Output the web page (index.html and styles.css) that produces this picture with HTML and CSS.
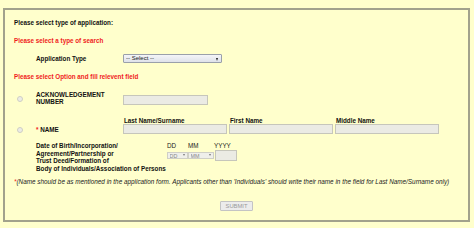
FILE: index.html
```html
<!DOCTYPE html>
<html>
<head>
<meta charset="utf-8">
<link rel="stylesheet" href="styles.css">
</head>
<body>
<div class="box">
  <p class="row heading">Please select type of application:</p>
  <p class="row err err1">Please select a type of search</p>
  <div class="row apptype">
    <span class="lbl">Application Type</span>
    <span class="sel sel-app"><select class="app-select"><option>-- Select --</option></select></span>
  </div>
  <p class="row err err2">Please select Option and fill relevent field</p>

  <div class="opt ack">
    <input type="radio" name="opt" class="radio">
    <span class="lbl multi">ACKNOWLEDGEMENT<br>NUMBER</span>
    <input type="text" class="field ack-field">
  </div>

  <div class="opt name">
    <input type="radio" name="opt" class="radio">
    <span class="lbl name-lbl"><span class="star">*</span> NAME</span>
    <div class="names">
      <span class="lbl">Last Name/Surname</span>
      <span class="lbl">First Name</span>
      <span class="lbl">Middle Name</span>
      <input type="text" class="field">
      <input type="text" class="field">
      <input type="text" class="field">
    </div>
  </div>

  <div class="opt dob">
    <span class="spacer"></span>
    <span class="lbl multi nowrap">Date of Birth/Incorporation/<br>Agreement/Partnership or<br>Trust Deed/Formation of<br>Body of Individuals/Association of Persons</span>
    <div class="dates">
      <span class="dlbl">DD</span>
      <span class="dlbl">MM</span>
      <span class="dlbl">YYYY</span>
      <span class="sel sel-small sel-dd"><select class="small-select"><option>DD</option></select></span>
      <span class="sel sel-small sel-mm"><select class="small-select"><option>MM</option></select></span>
      <input type="text" class="field year">
    </div>
  </div>

  <p class="note"><span class="star">*</span>(Name should be as mentioned in the application form. Applicants other than 'Individuals' should write their name in the field for Last Name/Surname only)</p>

  <div class="actions">
    <button type="button" class="submit">SUBMIT</button>
  </div>
</div>
</body>
</html>
```

FILE: styles.css
```css
html, body {
  margin: 0;
  padding: 0;
  background: #ffffcc;
}

body {
  font-family: "Liberation Sans", Arial, sans-serif;
  font-size: 6.3px;
  color: #111;
}

.box {
  box-sizing: border-box;
  width: 467px;
  height: 214px;
  margin: 8px 0 0 3px;
  border: 2px solid #a2a28c;
  padding: 0 9px 0 9px;
  background: #ffffcc;
}

p { margin: 0; }

.row {
  display: flex;
  align-items: center;
}

.heading {
  height: 24px;
  font-weight: bold;
  color: #111;
}

.err {
  font-weight: bold;
  color: #f01c1c;
}

.err1 { height: 13px; }
.err2 { height: 12px; }

.lbl {
  font-weight: bold;
  color: #111;
  line-height: 7.5px;
}

.apptype {
  height: 23px;
  padding-left: 22px;
}

.apptype .lbl {
  width: 87px;
  flex: none;
}

.sel {
  position: relative;
  display: inline-block;
}

.sel::after {
  content: "";
  position: absolute;
  top: 50%;
  margin-top: -1px;
  border-left: 1.5px solid transparent;
  border-right: 1.5px solid transparent;
  border-top: 3px solid #222;
  pointer-events: none;
}

select {
  -webkit-appearance: none;
  appearance: none;
  margin: 0;
  font-family: "Liberation Sans", Arial, sans-serif;
  outline: none;
  box-sizing: border-box;
}

.app-select {
  width: 99px;
  height: 9px;
  padding: 0 0 0 2px;
  font-size: 6px;
  line-height: 7px;
  color: #222;
  border: 1px solid #9aa0aa;
  border-radius: 1px;
  background: linear-gradient(#f4f5f8, #dfe2ea);
}

.sel-app::after { right: 4px; }

.opt {
  display: grid;
  grid-template-columns: 22px 87px auto;
  align-items: center;
}

.radio {
  -webkit-appearance: none;
  appearance: none;
  width: 6px;
  height: 6px;
  margin: 0 0 0 3px;
  border: 1px solid #cfcfc4;
  border-radius: 50%;
  background: #ecece6;
  box-sizing: border-box;
}

.field {
  box-sizing: border-box;
  margin: 0;
  padding: 0;
  height: 10px;
  border: 1px solid #c6c6bb;
  background: #ebebe4;
  outline: none;
}

.ack {
  height: 32px;
}

.ack .radio { margin-top: 2px; }

.ack-field {
  width: 85px;
  margin-top: 4px;
}

.name {
  height: 20px;
  align-items: end;
}

.name .radio { margin-bottom: 1px; }

.name-lbl { margin-bottom: 1px; }

.star { color: #f01c1c; }

.names {
  display: grid;
  grid-template-columns: 104px 104px 104px;
  column-gap: 2px;
  padding-top: 1.5px;
}

.names .lbl { padding-left: 1px; }

.names .field { width: 104px; }

.dob {
  grid-template-columns: 22px 131px auto;
  align-items: start;
  height: 38px;
  padding-top: 8px;
  box-sizing: border-box;
}

.nowrap { white-space: nowrap; }

.dates {
  display: grid;
  grid-template-columns: 21px 26px 23px;
  align-items: center;
}

.dlbl {
  color: #222;
  line-height: 7.5px;
}

.small-select {
  height: 7px;
  padding: 0 0 0 1.5px;
  font-size: 5.4px;
  line-height: 6px;
  color: #888;
  border: 1px solid #cfcfc6;
  background: #efefea;
}

.sel-dd .small-select { width: 21px; }
.sel-mm .small-select { width: 26px; }

.sel-small::after {
  right: 3px;
  border-left-width: 1px;
  border-right-width: 1px;
  border-top: 2px solid #777;
}

.year {
  width: 22px;
  height: 11px;
  margin-left: 1px;
}

.note {
  height: 18px;
  display: flex;
  align-items: center;
  font-size: 6.36px;
  font-style: italic;
  color: #222;
  white-space: nowrap;
}

.actions {
  display: flex;
  justify-content: center;
  padding-top: 11px;
}

.submit {
  width: 33px;
  height: 9.5px;
  margin: 0;
  padding: 0;
  font-family: "Liberation Sans", Arial, sans-serif;
  font-size: 5.8px;
  color: #9a9a9a;
  background: #ececec;
  border: 1px solid #c4c4c4;
  border-radius: 1px;
}
```
